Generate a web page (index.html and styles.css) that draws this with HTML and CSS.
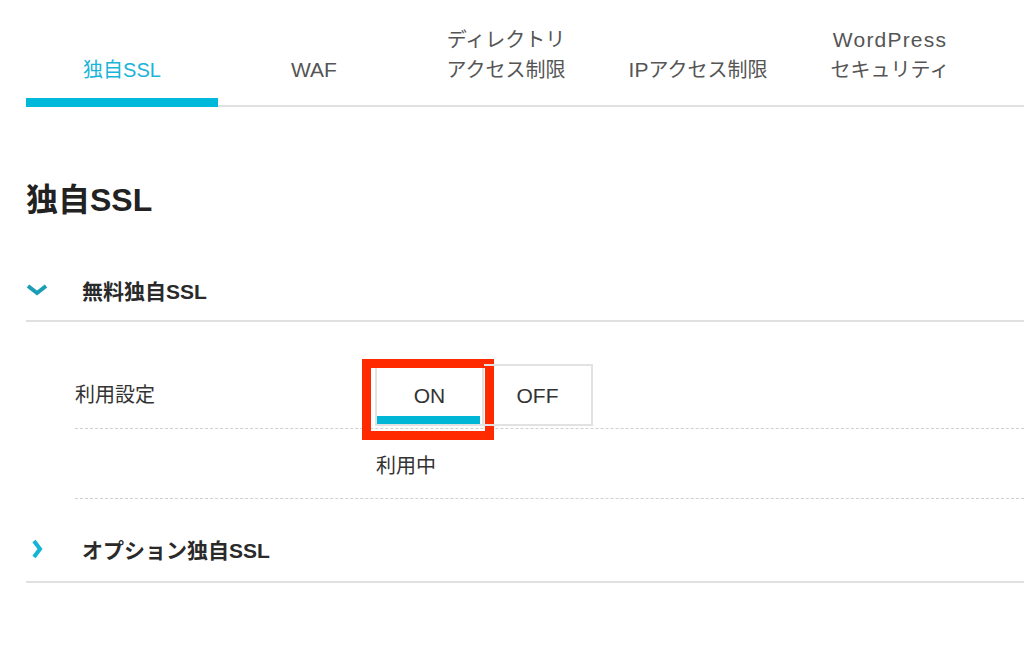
FILE: index.html
```html
<!DOCTYPE html>
<html lang="ja">
<head>
<meta charset="utf-8">
<link rel="stylesheet" href="styles.css">
</head>
<body>
<div class="page">
  <nav class="tabs">
    <div class="tab active"><span>独自SSL</span></div>
    <div class="tab"><span class="lat">WAF</span></div>
    <div class="tab"><span>ディレクトリ<br>アクセス制限</span></div>
    <div class="tab"><span><span class="lat">IP</span>アクセス制限</span></div>
    <div class="tab"><span><span class="lat wide">WordPress</span><br>セキュリティ</span></div>
  </nav>

  <h1 class="title">独自SSL</h1>

  <div class="section-head">
    <span class="chev">
      <svg width="22" height="12" viewBox="0 0 22 12"><path d="M2 2 L11 9 L20 2" fill="none" stroke="#1a9db5" stroke-width="4" stroke-linejoin="miter"/></svg>
    </span>
    <span class="section-label">無料独自SSL</span>
  </div>

  <div class="setting-row">
    <div class="setting-label">利用設定</div>
    <div class="toggle">
      <div class="toggle-btn on">ON<span class="highlight"></span></div>
      <div class="toggle-btn">OFF</div>
    </div>
  </div>
  <div class="status-row">
    <div class="setting-label"></div>
    <div class="status">利用中</div>
  </div>

  <div class="section-head option">
    <span class="chev">
      <svg width="12" height="20" viewBox="0 0 12 20"><path d="M3 2 L9 10 L3 18" fill="none" stroke="#14b4d6" stroke-width="4" stroke-linejoin="miter"/></svg>
    </span>
    <span class="section-label">オプション独自SSL</span>
  </div>
</div>
</body>
</html>
```

FILE: styles.css
```css
* { box-sizing: border-box; }
html, body { margin: 0; padding: 0; background: #fff; }
body {
  font-family: "Liberation Sans", "Noto Sans CJK JP", sans-serif;
  color: #333;
  width: 1024px;
  height: 649px;
  overflow: hidden;
}
.page {
  padding-left: 26px;
}
.tabs {
  display: flex;
  border-bottom: 2px solid #e0e0e0;
  height: 107px;
}
.tab {
  position: relative;
  width: 192px;
  flex: 0 0 192px;
  display: flex;
  align-items: flex-end;
  justify-content: center;
  padding-bottom: 20px;
  font-size: 20px;
  line-height: 30px;
  color: #555;
  text-align: center;
}
.tab .lat { font-size: 21px; }
.tab .lat.wide { letter-spacing: 1.2px; }
.tab.active { color: #1ab4d9; }
.tab.active::after {
  content: "";
  position: absolute;
  left: 0;
  right: 0;
  bottom: -2px;
  height: 9px;
  background: #00b8d9;
}
.title {
  margin: 73px 0 0;
  font-size: 32px;
  line-height: 40px;
  font-weight: bold;
  color: #222;
}
.section-head {
  display: flex;
  align-items: center;
  height: 62px;
  margin-top: 40px;
  border-bottom: 2px solid #e0e0e0;
}
.chev {
  width: 56px;
  flex: 0 0 56px;
  display: flex;
  align-items: center;
}
.section-label {
  font-size: 21px;
  font-weight: bold;
  color: #2a2a2a;
}
.setting-row {
  display: flex;
  align-items: center;
  margin-left: 49px;
  padding-top: 42px;
  padding-bottom: 2px;
  border-bottom: 1px dashed #d0d0d0;
}
.setting-label {
  width: 300px;
  flex: 0 0 300px;
  font-size: 20px;
  color: #333;
  padding-bottom: 4px;
}
.toggle {
  display: flex;
}
.toggle-btn {
  position: relative;
  width: 109px;
  height: 62px;
  border: 2px solid #e2e2e2;
  display: flex;
  align-items: center;
  justify-content: center;
  font-size: 21px;
  color: #333;
  padding-top: 1px;
}
.toggle-btn + .toggle-btn { border-left: none; }
.toggle-btn.on::before {
  content: "";
  position: absolute;
  left: 0;
  right: 2px;
  bottom: 0;
  height: 8px;
  background: #00b6d6;
}
.highlight {
  position: absolute;
  left: -15px;
  top: -7px;
  width: 132px;
  height: 81px;
  border: 9px solid #ff2a00;
}
.status-row {
  display: flex;
  align-items: center;
  margin-left: 49px;
  height: 70px;
  border-bottom: 1px dashed #d0d0d0;
}
.status {
  font-size: 20px;
  color: #333;
  padding-left: 1px;
  padding-top: 2px;
}
.section-head.option {
  margin-top: 18px;
  height: 66px;
}
.section-head.option .chev { padding-left: 5px; }
```
